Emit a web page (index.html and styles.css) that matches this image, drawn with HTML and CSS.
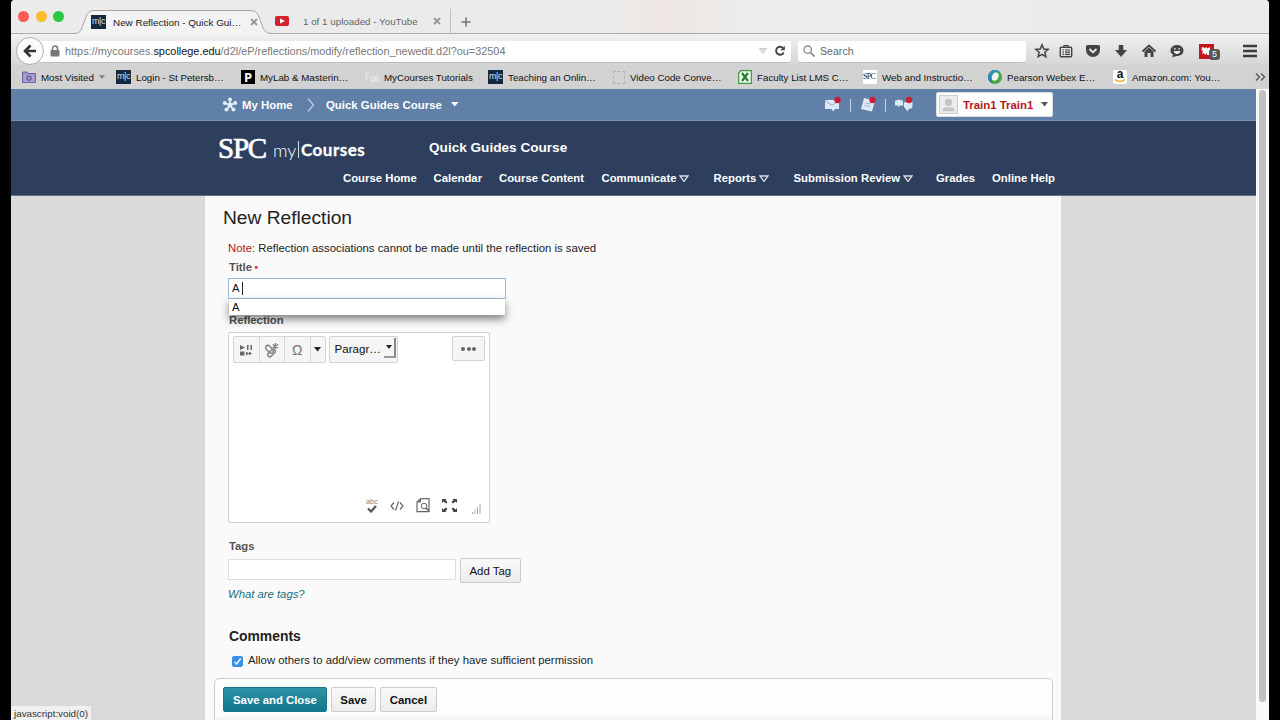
FILE: index.html
```
<!DOCTYPE html>
<html lang="en">
<head>
    <meta charset="utf-8">
    <title>New Reflection - Quick Guides Course</title>
    <link rel="stylesheet" href="styles.css">
</head>
<body>
<div class="window">
    <div class="tab-bar">
        <div class="lights"><i class="red"></i><i class="yellow"></i><i class="green"></i></div>
        <div class="tab active">
            <svg class="tab-shape" width="200" height="26" viewBox="0 0 200 26"><path d="M0 24.500C7 24.500 8 22 10 16L13 8C14.500 3 17 1.500 22 1.500H176C182 1.500 184 3 186 8L189 16C191 22 193 24.500 199 24.500V26H0Z" fill="#f3f3f3"/><path d="M0 24.500C7 24.500 8 22 10 16L13 8C14.500 3 17 1.500 22 1.500H176C182 1.500 184 3 186 8L189 16C191 22 193 24.500 199 24.500" fill="none" stroke="#a5a5a5"/></svg>
            <span class="mc">m|c</span>
            <span class="tab-title">New Reflection - Quick Gui…</span>
            <svg class="close" width="8" height="8" viewBox="0 0 8 8"><path d="M1 1L7 7M7 1L1 7"/></svg>
        </div>
        <div class="tab second">
            <svg width="14" height="10" viewBox="0 0 14 10"><rect width="14" height="10" rx="2" fill="#d3222a"/><path d="M5 2.500L10 5L5 7.500Z" fill="#fff"/></svg>
            <span class="tab-title">1 of 1 uploaded - YouTube</span>
            <svg class="close" width="8" height="8" viewBox="0 0 8 8"><path d="M1 1L7 7M7 1L1 7"/></svg>
        </div>
        <svg class="plus" width="10" height="10" viewBox="0 0 10 10"><path d="M5 .5V9.500M.5 5H9.500" stroke="#777" stroke-width="1.600"/></svg>
    </div>

    <div class="toolbar">
        <div class="back"><svg width="14" height="14" viewBox="0 0 14 14"><path d="M7.500 1.500L2 7L7.500 12.500M2.500 7H13" fill="none" stroke="#333" stroke-width="2.600"/></svg></div>
        <div class="url">
            <svg width="10" height="12" viewBox="0 0 10 12"><rect x=".5" y="5" width="9" height="6.500" rx="1" fill="#777"/><path d="M2.500 5.500V3.500A2.500 2.500 0 0 1 7.500 3.500V5.500" fill="none" stroke="#777" stroke-width="1.500"/></svg>
            <span class="address">https://mycourses.<b>spcollege.edu</b>/d2l/eP/reflections/modify/reflection_newedit.d2l?ou=32504</span>
            <svg class="history" width="8" height="6" viewBox="0 0 8 6"><path d="M.5 .5H7.500L4 5.500Z" fill="#ddd" stroke="#bbb" stroke-width=".7"/></svg>
            <svg width="12" height="12" viewBox="0 0 12 12"><path d="M9 3A4 4 0 1 0 9.700 7.500" fill="none" stroke="#444" stroke-width="1.900"/><path d="M10.800 .7V5.200H6.300Z" fill="#444"/></svg>
        </div>
        <div class="search">
            <svg width="12" height="12" viewBox="0 0 12 12"><circle cx="4.700" cy="4.700" r="3.700" fill="none" stroke="#888" stroke-width="1.300"/><path d="M7.500 7.500L11.500 11.500" stroke="#888" stroke-width="1.700"/></svg>
            <span>Search</span>
        </div>
        <div class="tools">
            <svg viewBox="0 0 16 16"><path d="M8 1.800L9.800 6L14.200 6.400L10.900 9.300L11.900 13.800L8 11.400L4.100 13.800L5.100 9.300L1.800 6.400L6.200 6Z" fill="none" stroke="#444" stroke-width="1.500"/></svg>
            <svg viewBox="0 0 16 16"><rect x="2.300" y="4.300" width="11.400" height="9.400" rx="1" fill="none" stroke="#444" stroke-width="1.400"/><path d="M6 4V2.500H10V4M4.500 7H6M7 7H12M4.500 9.200H6M7 9.200H12M4.500 11.400H6M7 11.400H12" fill="none" stroke="#444" stroke-width="1.200"/></svg>
            <svg viewBox="0 0 16 16"><path d="M2.500 2H13.500Q15 2 15 3.500V7A7 7 0 0 1 1 7V3.500Q1 2 2.500 2Z" fill="#444"/><path d="M4.500 6L8 9.300L11.500 6" fill="none" stroke="#eee" stroke-width="1.800"/></svg>
            <svg viewBox="0 0 16 16"><path d="M5.700 2H10.300V7H14L8 14L2 7H5.700Z" fill="#444"/></svg>
            <svg viewBox="0 0 16 16"><path d="M1.500 8.500L8 2.500L14.500 8.500" fill="none" stroke="#444" stroke-width="1.800"/><path d="M3.500 8.500L8 4.500L12.500 8.500V14H9.500V10H6.500V14H3.500Z" fill="#444"/></svg>
            <svg viewBox="0 0 16 16"><path d="M8 2C12 2 14.500 4.500 14.500 7.500S12 13 8 13L3 14.200L4 11.500C2 10.500 1.500 9 1.500 7.500C1.500 4.500 4 2 8 2Z" fill="#444"/><path d="M4.500 8H11.500Q10.500 11 8 11T4.500 8Z" fill="#eee"/><path d="M5 5.800H6.700M9.300 5.800H11" stroke="#eee" stroke-width="1.300"/></svg>
            <div class="addon"><svg width="15" height="15" viewBox="0 0 15 15"><rect width="15" height="15" fill="#c5161d"/><path d="M3 3L6 4L7 3L8.500 4.500L11 3V11H8V9L6 11L5 9L3 10L4 7L2.500 6Z" fill="#fff"/></svg><span>5</span></div>
            <svg class="menu" viewBox="0 0 16 16"><path d="M1 3H15M1 8H15M1 13H15" stroke="#3c3c3c" stroke-width="2.300"/></svg>
        </div>
    </div>

    <div class="bookmarks">
        <div><svg class="ico" viewBox="0 0 14 14"><path d="M.5 2H5L6 3.500H13.500V12.500H.5Z" fill="#9a8cc4" stroke="#7264a5"/><rect x="1.500" y="4.500" width="11" height="7.500" fill="#aba0d2"/><circle cx="7" cy="8.300" r="2" fill="none" stroke="#6d5ea2" stroke-width="1.500"/></svg><span>Most Visited</span><svg width="6" height="4" viewBox="0 0 6 4"><path d="M0 0H6L3 4Z" fill="#888"/></svg></div>
        <div><span class="mc">m|c</span><span>Login - St Petersb…</span></div>
        <div><span class="ico pearson">P</span><span>MyLab &amp; Masterin…</span></div>
        <div><svg class="ico" viewBox="0 0 14 14"><path d="M1 11V5Q1 3 4 3M1 7H3.500M6 7H9V11H6ZM10.500 7H13V10.500H10.500Z" fill="none" stroke="#e4e4e4" stroke-width="1.500"/></svg><span>MyCourses Tutorials</span></div>
        <div><span class="mc">m|c</span><span>Teaching an Onlin…</span></div>
        <div><span class="ico blank"></span><span>Video Code Conve…</span></div>
        <div><svg class="ico" viewBox="0 0 14 14"><path d="M3 .7H13.300V13.300H.7V3Z" fill="#f3fbf0" stroke="#3c9440" stroke-width="1.200"/><path d="M4 3L10 11M10 3L4 11" stroke="#268133" stroke-width="2.300"/></svg><span>Faculty List LMS C…</span></div>
        <div><span class="ico spc">SPC</span><span>Web and Instructio…</span></div>
        <div><svg class="ico" viewBox="0 0 14 14"><circle cx="7" cy="7" r="7" fill="#47a844"/><path d="M7 0A7 7 0 0 0 5 13.700Q1 7 7 0" fill="#247fa8"/><path d="M7 0A7 7 0 0 0 1 10Q4 2 12 2Q10 0 7 0" fill="#2992bb"/><ellipse cx="7" cy="6.500" rx="3.200" ry="4.300" fill="#eef8ee" transform="rotate(25 7 7)"/></svg><span>Pearson Webex E…</span></div>
        <div><span class="ico amazon">a<svg width="12" height="4" viewBox="0 0 12 4"><path d="M1 .5Q6 4.500 11 .5" fill="none" stroke="#e8a91c" stroke-width="1.300"/></svg></span><span>Amazon.com: You…</span></div>
        <div><svg width="11" height="8" viewBox="0 0 11 8"><path d="M1 .5L4.500 4L1 7.500M6 .5L9.500 4L6 7.500" fill="none" stroke="#555" stroke-width="1.400"/></svg></div>
    </div>

    <div class="viewport">
        <div class="page">
            <div class="minibar">
                <div class="crumbs">
                    <svg width="16" height="16" viewBox="0 0 16 16"><path d="M8 8L8 2M8 8L13.500 6M8 8L11.500 13M8 8L4.500 13M8 8L2.500 6" stroke="#e4eefa" stroke-width="1.500"/><g fill="#e4eefa"><circle cx="8" cy="8" r="2.600"/><circle cx="8" cy="2.500" r="2"/><circle cx="13.200" cy="6" r="2"/><circle cx="11.500" cy="12.500" r="2"/><circle cx="4.500" cy="12.500" r="2"/><circle cx="2.800" cy="6" r="2"/></g></svg>
                    <a class="home">My Home</a>
                    <svg class="sep" width="8" height="14" viewBox="0 0 8 14"><path d="M1 .5L6.500 7L1 13.500" fill="none" stroke="#bdd0e6" stroke-width="1.200"/></svg>
                    <a class="course">Quick Guides Course</a>
                    <svg width="8" height="5" viewBox="0 0 8 5"><path d="M0 0H7.500L3.750 4.500Z" fill="#fff"/></svg>
                </div>
                <div class="alerts">
                    <svg width="17" height="16" viewBox="0 0 17 16"><path d="M0 4H14V13H10L8 15.500L6.500 13H0Z" fill="#dce8f5"/><path d="M0 4.500L7 9.500L14 4.500" fill="none" stroke="#8ba9cb"/><circle cx="12.500" cy="4" r="3.200" fill="#c91f36"/></svg>
                    <i></i>
                    <svg width="17" height="16" viewBox="0 0 17 16"><path d="M4 2L15 4.500L12 15.500L1 13Z" fill="#dce8f5"/><path d="M5 7L11 8M4.500 9.500L10.500 10.500" stroke="#a1b8d1"/><circle cx="12.500" cy="4" r="3.200" fill="#c91f36"/></svg>
                    <i></i>
                    <svg width="19" height="16" viewBox="0 0 19 16"><path d="M0 5Q4 2.500 8 5V9.500H5L3 11V9.500H0Z" fill="#dce8f5"/><path d="M9 7Q13 3 17.500 6V11Q16.500 13 14 13L12 15.500L11 13Q8 11 9 7Z" fill="#dce8f5"/><circle cx="14" cy="4" r="3.200" fill="#c91f36"/></svg>
                </div>
                <div class="user">
                    <svg width="19" height="19" viewBox="0 0 18 18"><rect x=".5" y=".5" width="17" height="17" fill="#eee" stroke="#ccc"/><circle cx="9" cy="7" r="3.500" fill="#c5c5c5"/><path d="M3 15.500Q3 11.500 7 11.500H11Q15 11.500 15 15.500Z" fill="#c5c5c5"/></svg>
                    <span>Train1 Train1</span>
                    <svg width="7" height="5" viewBox="0 0 7 5"><path d="M0 0H7L3.500 4.500Z" fill="#555"/></svg>
                </div>
            </div>

            <div class="header">
                <div class="brand">
                    <span class="logo-spc">SPC</span>
                    <span class="logo-my">my</span><i></i><span class="logo-courses">Courses</span>
                    <h2>Quick Guides Course</h2>
                </div>
                <div class="nav">
                    <a>Course Home</a>
                    <a>Calendar</a>
                    <a>Course Content</a>
                    <a>Communicate<svg width="10" height="8" viewBox="0 0 10 8"><path d="M1 1H9L5 6.500Z"/></svg></a>
                    <a>Reports<svg width="10" height="8" viewBox="0 0 10 8"><path d="M1 1H9L5 6.500Z"/></svg></a>
                    <a>Submission Review<svg width="10" height="8" viewBox="0 0 10 8"><path d="M1 1H9L5 6.500Z"/></svg></a>
                    <a>Grades</a>
                    <a>Online Help</a>
                </div>
            </div>

            <div class="content">
                <h1>New Reflection</h1>
                <div class="form">
                    <p class="note"><em>Note:</em> Reflection associations cannot be made until the reflection is saved</p>
                    <label class="title-label">Title <b>•</b></label>
                    <div class="title-field"><span>A</span><i></i>
                        <div class="autocomplete">A</div>
                    </div>
                    <label class="reflection-label">Reflection</label>

                    <div class="editor">
                        <div class="editor-top">
                            <div class="group">
                                <span><svg width="14" height="12" viewBox="0 0 14 12"><path d="M1 1L6 3.500L1 6ZM8 1H9.500V6H8ZM11.500 1H13V6H11.500ZM1 7.500H5.500V11.500H1ZM7 7.500L10 9.500L7 11.500ZM10 7.500L13 9.500L10 11.500Z" fill="#666"/></svg></span>
                                <span><svg width="16" height="16" viewBox="0 0 16 16"><g fill="none" stroke="#808080" stroke-width="1.400"><rect x="1" y="5" width="9" height="4.500" rx="2.200" transform="rotate(45 5.500 7.200)"/><rect x="3" y="9" width="9" height="4" rx="2" transform="rotate(-45 7.500 11)"/><path d="M11.500 1V7M8.700 2.500L14.300 5.500M14.300 2.500L8.700 5.500"/></g></svg></span>
                                <span class="omega">Ω</span>
                                <span class="drop"><svg width="7" height="5" viewBox="0 0 7 5"><path d="M0 0H7L3.500 4.500Z" fill="#222"/></svg></span>
                            </div>
                            <div class="format"><span>Paragr…</span><b><svg width="6" height="4" viewBox="0 0 6 4"><path d="M0 0H6L3 4Z" fill="#222"/></svg></b></div>
                            <div class="dots"><i></i><i></i><i></i></div>
                        </div>
                        <div class="editor-bottom">
                            <div class="spell">abc<svg width="10" height="8" viewBox="0 0 10 8"><path d="M1 3.500L4 6.500L9 1" fill="none" stroke="#555" stroke-width="2.200"/></svg></div>
                            <svg width="14" height="10" viewBox="0 0 14 10"><path d="M4 1.500L1 5L4 8.500M10 1.500L13 5L10 8.500M8.500 .5L5.500 9.500" fill="none" stroke="#666" stroke-width="1.200"/></svg>
                            <svg width="14" height="15" viewBox="0 0 14 15"><path d="M4.500 .7H13V14M4.500 .7V4H1V13.700H13M1 4L4.500 .7" fill="none" stroke="#666" stroke-width="1.200"/><circle cx="8" cy="8" r="2.800" fill="#fff" stroke="#666"/><path d="M10 10L13 13" stroke="#666" stroke-width="1.600"/></svg>
                            <svg width="15" height="13" viewBox="0 0 15 13"><path d="M0 0H4.500L3.500 1L5.500 3L4 4.500L1.500 2.500L0 4ZM15 0H10.500L11.500 1L9.500 3L11 4.500L13.500 2.500L15 4ZM0 13H4.500L3.500 12L5.500 10L4 8.500L1.500 10.500L0 9ZM15 13H10.500L11.500 12L9.500 10L11 8.500L13.500 10.500L15 9Z" fill="#444"/></svg>
                            <svg class="grip" width="9" height="10" viewBox="0 0 9 10"><path d="M.5 8V10M3 5.500V10M5.500 3V10M8 0V10" stroke="#aaa"/></svg>
                        </div>
                    </div>

                    <label class="tags-label">Tags</label>
                    <div class="tag-row">
                        <div class="tag-input"></div>
                        <div class="btn">Add Tag</div>
                    </div>
                    <a class="tag-help">What are tags?</a>

                    <h3>Comments</h3>
                    <div class="allow">
                        <svg width="11" height="11" viewBox="0 0 11 11"><rect width="11" height="11" rx="2" fill="#3b8fe8"/><path d="M2.500 5.800L4.700 8L8.700 2.500" fill="none" stroke="#fff" stroke-width="1.400"/></svg>
                        <span>Allow others to add/view comments if they have sufficient permission</span>
                    </div>
                </div>
                <div class="actions">
                    <div class="btn primary">Save and Close</div>
                    <div class="btn save">Save</div>
                    <div class="btn cancel">Cancel</div>
                </div>
            </div>
        </div>
        <div class="scrollbar"><i></i></div>
    </div>
    <div class="status">javascript:void(0)</div>
</div>
</body>
</html>
```
FILE: styles.css
```
* {
    box-sizing: border-box;
}

body {
    margin: 0;
    background: #000;
    font-family: "Liberation Sans", Arial, sans-serif;
    font-size: 11.2px;
    color: #222;
    overflow: hidden;
}

svg {
    display: block;
    flex: none;
}

h1, h2, h3, p {
    margin: 0;
}

.window {
    position: relative;
    display: flex;
    flex-direction: column;
    width: 1258px;
    height: 720px;
    margin-left: 11px;
    background: #dadada;
    border-radius: 4px 4px 0 0;
    overflow: hidden;
    white-space: nowrap;
}

/* browser tabs */
.tab-bar {
    display: flex;
    align-items: flex-end;
    height: 34px;
    background: linear-gradient(90deg, #ebebeb, #ebebeb 48%, #eee6e2 52%, #ececec 58%, #ebebeb);
    border-bottom: 1px solid #ababab;
    font-size: 9.9px;
}

.lights {
    display: flex;
    gap: 6.5px;
    width: 62px;
    padding-left: 7px;
    margin-bottom: 11px;
}

.lights i {
    width: 11px;
    height: 11px;
    border-radius: 50%;
}

.lights .red {
    background: #fc5b57;
}

.lights .yellow {
    background: #fdbc2e;
}

.lights .green {
    background: #2bc840;
}

.tab {
    display: flex;
    align-items: center;
    height: 24px;
}

.tab.active {
    position: relative;
    width: 200px;
    padding-left: 18px;
    margin-bottom: -1px;
}

.tab-shape {
    position: absolute;
    left: 0;
    top: -1px;
}

.active .mc, .active .tab-title, .active .close {
    position: relative;
}

.active .tab-title {
    width: 137px;
    margin-left: 7px;
}

.close path {
    stroke: #999;
    stroke-width: 2;
}

.tab.second {
    width: 178px;
    padding-left: 2px;
    border-right: 1px solid #c0c0c0;
    color: #666;
}

.second .tab-title {
    width: 130px;
    margin-left: 14px;
    font-size: 9.8px;
}

.plus {
    margin: 0 0 6px 10px;
}

.mc {
    flex: none;
    width: 15px;
    height: 14px;
    background: #14283f;
    color: #d8e4ef;
    font-size: 9px;
    line-height: 13px;
    letter-spacing: -0.5px;
    text-align: center;
}

/* address bar */
.toolbar {
    display: flex;
    align-items: center;
    height: 31px;
    padding: 0 10px 0 5px;
    background: linear-gradient(#f0f0f0, #d6d6d6);
}

.back {
    display: flex;
    align-items: center;
    justify-content: center;
    width: 28px;
    height: 28px;
    margin-top: 2px;
    background: #fbfbfb;
    border: 1px solid #b0b0b0;
    border-radius: 50%;
    z-index: 1;
}

.url, .search {
    display: flex;
    align-items: center;
    height: 22px;
    background: #fff;
    border-bottom: 1px solid #bbb;
    border-radius: 0 3px 3px 0;
    margin-top: 4px;
}

.url {
    width: 751px;
    padding-left: 10px;
    margin-left: -4px;
    color: #777;
    font-size: 10.9px;
}

.address {
    width: 694px;
    margin-left: 5px;
}

.address b {
    font-weight: normal;
    color: #111;
}

.history {
    margin-right: 7px;
}

.search {
    gap: 5px;
    width: 228px;
    margin-left: 7px;
    padding-left: 5px;
    border-radius: 3px;
    color: #666;
    font-size: 10.6px;
}

.tools {
    display: grid;
    grid-template-columns: 24px 27px 28px 28px 28px 28px 45px 16px;
    align-items: center;
    margin: 3px 0 0 8px;
}

.tools > svg {
    width: 16px;
    height: 16px;
}

.addon {
    position: relative;
    padding-left: 2px;
}

.addon span {
    position: absolute;
    left: 12px;
    top: 5px;
    width: 11px;
    height: 11px;
    background: #555;
    border-radius: 3px;
    color: #fff;
    font-size: 9px;
    line-height: 11px;
    text-align: center;
}

.bookmarks {
    display: grid;
    grid-template-columns: 94px 125px 124px 123px 125px 125px 125px 125px 125px 142px 12px;
    align-items: center;
    height: 24px;
    padding-left: 11px;
    background: #d2d2d2;
    font-size: 9.75px;
    color: #111;
}

.bookmarks > div {
    display: flex;
    align-items: center;
    gap: 5px;
}

.ico {
    flex: none;
    width: 14px;
    height: 14px;
}

.pearson {
    background: #000;
    color: #fff;
    font: bold 13px/14px "Open Sans", sans-serif;
    text-align: center;
}

.blank {
    width: 12px;
    height: 13px;
    border: 1px dashed #b3b3b3;
}

.spc {
    background: #fff;
    font: 8px/14px "Liberation Serif", serif;
    letter-spacing: -0.7px;
}

.amazon {
    background: #fff;
    border-radius: 2px;
    font-size: 12px;
    font-weight: bold;
    line-height: 9px;
    text-align: center;
}

.amazon svg {
    margin: 0 1px;
}

/* page */
.viewport {
    display: flex;
    height: 631px;
}

.page {
    width: 1245px;
    background: #dadada;
}

.scrollbar {
    width: 13px;
    padding: 1px 3px;
    background: #fafafa;
}

.scrollbar i {
    display: block;
    width: 7px;
    height: 612px;
    background: #c1c1c1;
    border-radius: 4px;
}

.minibar {
    display: flex;
    align-items: center;
    height: 32px;
    padding-left: 211px;
    background: #6080a8;
    border-bottom: 1px solid #7790b0;
    color: #fff;
    font-size: 11.4px;
    font-weight: bold;
}

.crumbs {
    display: flex;
    align-items: center;
    width: 603px;
}

.home {
    width: 65px;
    margin-left: 4px;
}

.course {
    width: 125px;
    margin-left: 11px;
}

.alerts {
    display: flex;
    align-items: center;
    width: 100px;
    padding-bottom: 1px;
}

.alerts i {
    width: 1px;
    height: 13px;
    margin: 3px 9px 0 8px;
    background: #c6d5e6;
}

.user {
    display: flex;
    align-items: center;
    width: 117px;
    height: 25px;
    margin-left: 11px;
    padding-left: 2px;
    background: #fff;
    border: 1px solid #ddd;
    border-radius: 2px;
    color: #b5161d;
}

.user span {
    width: 78px;
    margin-left: 5px;
}

.header {
    height: 75px;
    padding-left: 207px;
    background: #2e3f5e;
    border-bottom: 1px solid #64728d;
    color: #fff;
}

.brand {
    display: flex;
    align-items: center;
    height: 48px;
    padding-top: 5px;
}

.logo-spc {
    width: 55px;
    font: 29px/30px "Liberation Serif", serif;
    letter-spacing: -1.2px;
    -webkit-text-stroke: 0.7px #fff;
}

.logo-my, .logo-courses {
    font-family: Lato, sans-serif;
    padding-top: 4px;
}

.logo-my {
    width: 24px;
    font-size: 18px;
    font-weight: 300;
}

.brand i {
    width: 1px;
    height: 17px;
    margin: 3px 2px 0 1px;
    background: #d5dbe5;
}

.logo-courses {
    width: 128px;
    font-size: 17px;
    font-weight: bold;
    letter-spacing: 0.5px;
    -webkit-text-stroke: 0.3px #fff;
}

.brand h2 {
    font-size: 13.6px;
    line-height: 20px;
}

.nav {
    display: grid;
    grid-template-columns: 90.5px 65.5px 102.5px 112px 80px 142.5px 56px 70px;
    padding-left: 125px;
    font-size: 11.35px;
    font-weight: bold;
    line-height: 19px;
}

.nav a {
    display: flex;
    align-items: center;
    gap: 2.5px;
}

.nav path {
    fill: none;
    stroke: #d5dbe5;
    stroke-width: 1.3;
}

.content {
    width: 856px;
    height: 524px;
    margin-left: 194px;
    background: #fafafa;
}

h1 {
    padding-left: 18px;
    font-size: 19.2px;
    font-weight: normal;
    line-height: 43px;
}

.form {
    display: flex;
    flex-direction: column;
    align-items: flex-start;
    padding-left: 23px;
}

.note {
    line-height: 18px;
    font-size: 11.36px;
}

.note em {
    color: #b5161d;
    font-style: normal;
}

label {
    padding-left: 1px;
    color: #555;
    font-size: 11.3px;
    font-weight: bold;
    line-height: 20px;
}

label b {
    margin-left: -1px;
    color: #e0474c;
}

.title-field {
    position: relative;
    display: flex;
    align-items: center;
    width: 278px;
    height: 21px;
    margin-top: 1px;
    padding: 0 0 1px 3px;
    background: #fff;
    border: 1px solid #9db8d8;
    color: #111;
}

.title-field i {
    width: 1px;
    height: 13px;
    margin-left: 3px;
    background: #222;
}

.autocomplete {
    position: absolute;
    left: 0;
    top: 20px;
    width: 276px;
    height: 16px;
    padding-left: 3px;
    background: #fff;
    box-shadow: 0 4px 8px rgba(0, 0, 0, 0.5);
    line-height: 16px;
}

.reflection-label {
    margin-top: 11px;
    height: 22px;
}

.editor {
    display: flex;
    flex-direction: column;
    justify-content: space-between;
    width: 262px;
    height: 191px;
    background: #fff;
    border: 1px solid #d0d0d0;
    border-radius: 2px;
}

.editor-top {
    display: flex;
    align-items: flex-start;
    padding: 3px 4px;
}

.group, .format, .dots {
    display: flex;
    align-items: center;
    height: 27px;
    background: #f5f5f5;
    border: 1px solid #d3d3d3;
    border-radius: 2px;
}

.group span {
    display: flex;
    align-items: center;
    justify-content: center;
    width: 25.5px;
    height: 25px;
    border-right: 1px solid #d8d8d8;
}

.group .omega {
    color: #707070;
    font-size: 14px;
}

.group .drop {
    width: 14px;
    border-right: 0;
}

.format {
    width: 69px;
    margin-left: 3px;
    padding-left: 5px;
    color: #111;
    font-size: 11.6px;
}

.format span {
    width: 49px;
    margin-top: -3px;
}

.format b {
    display: flex;
    align-items: center;
    justify-content: center;
    width: 12px;
    height: 20px;
    margin-top: -4px;
    border-right: 2px solid #888;
    border-bottom: 2px solid #999;
}

.dots {
    justify-content: center;
    gap: 1.5px;
    width: 33px;
    height: 25px;
    margin-left: auto;
}

.dots i {
    width: 4px;
    height: 4px;
    border-radius: 50%;
    background: #666;
}

.editor-bottom {
    display: flex;
    align-items: center;
    justify-content: flex-end;
    gap: 12px;
    height: 28px;
    padding: 0 8px 5px 0;
}

.spell {
    display: flex;
    flex-direction: column;
    align-items: center;
    color: #888;
    font-size: 7.5px;
    line-height: 6px;
}

.grip {
    margin: 6px 0 0 3px;
}

.tags-label {
    margin-top: 12px;
    height: 23px;
    line-height: 22px;
}

.tag-row {
    display: flex;
    align-items: center;
    gap: 4px;
    height: 25px;
}

.tag-input {
    width: 228px;
    height: 21px;
    margin-top: -2px;
    background: #fff;
    border: 1px solid #ddd;
}

.btn {
    height: 25px;
    padding: 0 8.5px;
    background: linear-gradient(#fafafa, #ececec);
    border: 1px solid #ccc;
    border-radius: 2px;
    color: #111;
    line-height: 24px;
}

.tag-row .btn {
    font-size: 11.4px;
}

.tag-help {
    color: #13707f;
    font-size: 11.3px;
    font-style: italic;
    line-height: 22px;
}

h3 {
    margin-top: 21px;
    padding-left: 1px;
    font-size: 13.9px;
    line-height: 20px;
}

.allow {
    display: flex;
    align-items: center;
    gap: 5px;
    height: 20px;
    margin-top: 4px;
    padding-left: 4px;
    font-size: 11.36px;
}

.allow svg {
    margin-top: 2px;
}

.actions {
    display: flex;
    gap: 4px;
    width: 839px;
    height: 46px;
    margin: 8px 0 0 9px;
    padding: 8px;
    background: #fefefe;
    border: 1px solid #ccc;
    border-radius: 5px 5px 0 0;
    box-shadow: inset 0 -8px 10px -8px #ccc;
    font-size: 11.35px;
    font-weight: bold;
}

.actions .primary {
    padding: 0 9px;
    background: linear-gradient(#2f93a6, #11788d);
    border-color: #17788b;
    color: #fff;
}

.status {
    position: absolute;
    left: 0;
    bottom: 0;
    width: 80px;
    height: 14px;
    padding-left: 3px;
    background: #f0f0f0;
    color: #333;
    font-size: 9.8px;
    line-height: 15px;
}
```
